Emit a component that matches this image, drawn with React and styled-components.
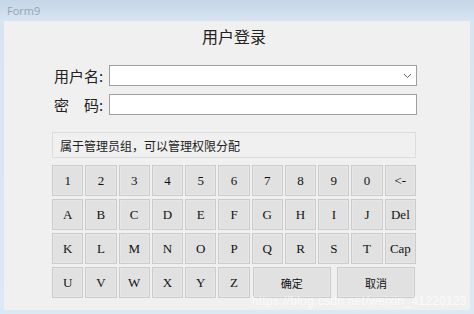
import React from "react";
import styled, { createGlobalStyle } from "styled-components";

const Global = createGlobalStyle`
  html, body { margin: 0; padding: 0; background: #dbe8f5; }
  body { width: 474px; height: 314px; overflow: hidden; }
`;

const Window = styled.div`
  position: relative;
  width: 474px;
  height: 314px;
  box-sizing: border-box;
  display: flex;
  flex-direction: column;
  background: linear-gradient(#c6d6e7, #d7e4f2 21px, #dbe8f5);
  padding: 0 4px 4px 4px;
  font-family: "Noto Sans CJK SC", sans-serif;
`;

const TitleBar = styled.div`
  height: 21px;
  display: flex;
  align-items: center;
  padding-left: 3px;
  font-family: "Open Sans", "Noto Sans", sans-serif;
  font-size: 11px;
  color: #95a3b3;
`;

const Client = styled.div`
  flex: 1;
  background: #f0f0f0;
  display: flex;
  flex-direction: column;
  padding: 0 0 0 48px;
`;

const Heading = styled.div`
  margin-top: 5px;
  height: 20px;
  line-height: 20px;
  font-size: 16px;
  color: #222;
  width: 364px;
  text-align: center;
`;

const FormRow = styled.div`
  display: flex;
  align-items: center;
  height: 21px;
  margin-top: ${(p) => p.$mt}px;
  padding-left: 2px;
`;

const Label = styled.div`
  width: 55px;
  font-size: 15px;
  color: #222;
  white-space: pre;
  line-height: 21px;
`;

const Field = styled.div`
  position: relative;
  width: 308px;
  height: 21px;
  box-sizing: border-box;
  background: #fff;
  border: 1px solid #9f9f9f;
`;

const Chevron = styled.svg`
  position: absolute;
  right: 4px;
  top: 7px;
`;

const Info = styled.div`
  margin-top: 17px;
  width: 364px;
  height: 26px;
  box-sizing: border-box;
  border: 1px solid #dcdcdc;
  display: flex;
  align-items: center;
  padding-left: 7px;
  font-size: 12px;
  color: #222;
`;

const Keyboard = styled.div`
  margin-top: 7px;
  width: 364px;
  display: grid;
  grid-template-columns: repeat(11, 1fr);
  grid-auto-rows: 31px;
  column-gap: 2px;
  row-gap: 3px;
`;

const Key = styled.div`
  box-sizing: border-box;
  background: #e1e1e1;
  border: 1px solid #cbcbcb;
  box-shadow: inset 0 0 0 1px #e6e6e6;
  display: flex;
  align-items: center;
  justify-content: center;
  font-family: "Liberation Serif", serif;
  font-size: 13px;
  color: #111;
`;

const ActionGroup = styled.div`
  grid-column: 7 / span 5;
  display: flex;
  gap: 6px;
  padding-left: 1px;
  padding-right: 1px;
`;

const ActionKey = styled(Key)`
  flex: 1;
  font-family: "Noto Sans CJK SC", sans-serif;
  font-size: 11px;
`;

const Watermark = styled.div`
  position: absolute;
  right: 7px;
  bottom: 6px;
  font-family: "Liberation Sans", sans-serif;
  font-size: 12px;
  color: rgba(255, 255, 255, 0.7);
  letter-spacing: 0.3px;
`;

const rows = [
  ["1", "2", "3", "4", "5", "6", "7", "8", "9", "0", "<-"],
  ["A", "B", "C", "D", "E", "F", "G", "H", "I", "J", "Del"],
  ["K", "L", "M", "N", "O", "P", "Q", "R", "S", "T", "Cap"],
];
const lastRow = ["U", "V", "W", "X", "Y", "Z"];

export default function App() {
  return (
    <>
      <Global />
      <Window>
        <TitleBar>Form9</TitleBar>
        <Client>
          <Heading>用户登录</Heading>
          <FormRow $mt={19}>
            <Label>用户名:</Label>
            <Field>
              <Chevron width="9" height="6" viewBox="0 0 9 6">
                <path d="M1 1 L4.5 4.5 L8 1" fill="none" stroke="#666" strokeWidth="1" />
              </Chevron>
            </Field>
          </FormRow>
          <FormRow $mt={8}>
            <Label>{"密　码:"}</Label>
            <Field />
          </FormRow>
          <Info>属于管理员组，可以管理权限分配</Info>
          <Keyboard>
            {rows.flat().map((k, i) => (
              <Key key={i}>{k}</Key>
            ))}
            {lastRow.map((k) => (
              <Key key={k}>{k}</Key>
            ))}
            <ActionGroup>
              <ActionKey>确定</ActionKey>
              <ActionKey>取消</ActionKey>
            </ActionGroup>
          </Keyboard>
        </Client>
        <Watermark>https://blog.csdn.net/weixin_41220123</Watermark>
      </Window>
    </>
  );
}
